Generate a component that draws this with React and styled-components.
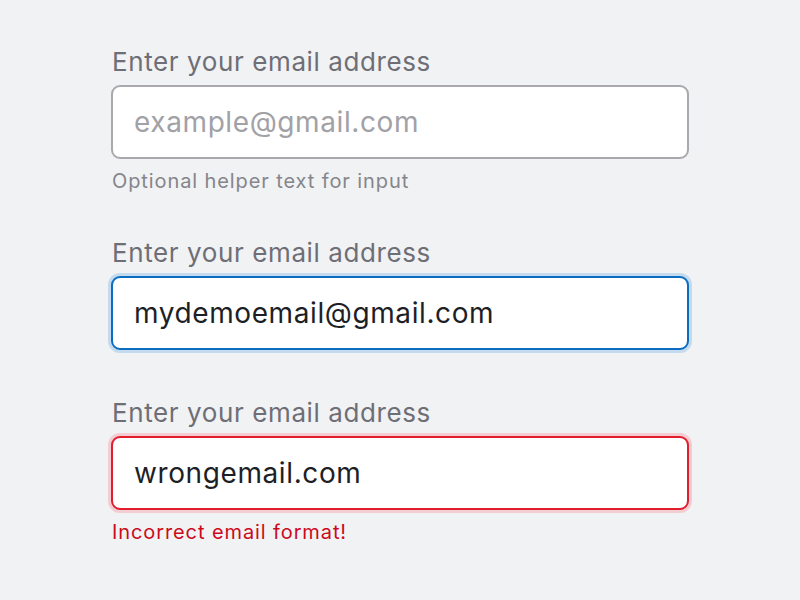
import styled, { createGlobalStyle } from "styled-components";

const Global = createGlobalStyle`
  html, body {
    margin: 0;
    padding: 0;
    background: #f1f2f4;
    font-family: Inter, "Noto Sans", sans-serif;
  }
`;

const Page = styled.div`
  width: 800px;
  height: 600px;
  box-sizing: border-box;
  padding: 46px 111px 0;
  display: flex;
  flex-direction: column;
`;

const Field = styled.div`
  display: flex;
  flex-direction: column;
  margin-bottom: ${(p) => p.$after}px;
`;

const Label = styled.label`
  font-size: 26px;
  line-height: 32px;
  letter-spacing: 0.6px;
  color: #6e6e76;
  margin: 0 0 7px 1px;
`;

const colors = {
  normal: { border: "#a8a8ad", ring: "transparent" },
  focus: { border: "#0a6dc2", ring: "#c4daee" },
  error: { border: "#e11d2e", ring: "#f3cdd2" },
};

const Input = styled.input`
  box-sizing: border-box;
  width: 578px;
  height: 74px;
  padding: 0 21px;
  border: 2px solid ${(p) => colors[p.$state].border};
  border-radius: 9px;
  box-shadow: 0 0 0 3px ${(p) => colors[p.$state].ring};
  background: #fff;
  font-family: inherit;
  font-size: 28px;
  letter-spacing: 0.6px;
  color: #1e1f26;
  outline: none;

  &::placeholder {
    color: #a1a1a6;
  }
`;

const Hint = styled.div`
  font-size: 20px;
  line-height: 24px;
  letter-spacing: 0.9px;
  margin: 10px 0 0 1px;
  color: ${(p) => (p.$error ? "#cc0a1b" : "#85858b")};
`;

export default function App() {
  return (
    <>
      <Global />
      <Page>
        <Field $after={44}>
          <Label>Enter your email address</Label>
          <Input $state="normal" placeholder="example@gmail.com" readOnly />
          <Hint>Optional helper text for input</Hint>
        </Field>
        <Field $after={47}>
          <Label>Enter your email address</Label>
          <Input $state="focus" defaultValue="mydemoemail@gmail.com" readOnly />
        </Field>
        <Field $after={0}>
          <Label>Enter your email address</Label>
          <Input $state="error" defaultValue="wrongemail.com" readOnly />
          <Hint $error>Incorrect email format!</Hint>
        </Field>
      </Page>
    </>
  );
}
